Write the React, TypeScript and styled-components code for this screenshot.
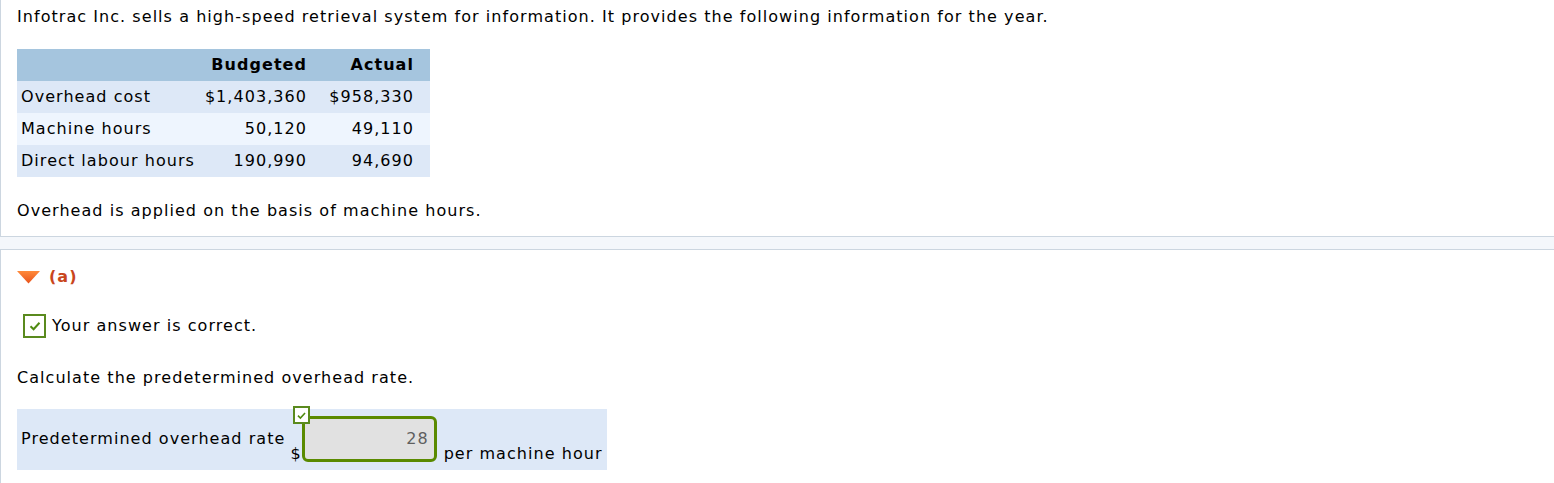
import React from 'react';
import styled, { createGlobalStyle } from 'styled-components';

const GlobalStyle = createGlobalStyle`
  body {
    margin: 0;
    background: #ffffff;
    font-family: 'DejaVu Sans', Verdana, sans-serif;
    font-size: 16px;
    letter-spacing: 1.05px;
    color: #000000;
  }
`;

const Page = styled.div`
  width: 1554px;
`;

const Panel = styled.section<{ top?: boolean }>`
  border-left: 1px solid #ccd6e0;
  ${props => (props.top ? 'border-bottom: 1px solid #ccd6e0;' : 'border-top: 1px solid #ccd6e0;')}
  padding: ${props => (props.top ? '7px 16px 15px 16px' : '17px 16px 13px 16px')};
  background: #ffffff;
`;

const Spacer = styled.div`
  height: 12px;
  background: #f4f7fb;
`;

const Text = styled.p<{ mt?: number }>`
  margin: ${props => props.mt || 0}px 0 0;
  line-height: 20px;
`;

const DataTable = styled.table`
  margin-top: 22px;
  border-collapse: collapse;
  table-layout: fixed;
  width: 413px;

  th,
  td {
    height: 32px;
    padding: 0 4px;
    line-height: 20px;
    white-space: nowrap;
  }

  th {
    background: #a5c5de;
    font-weight: bold;
    text-align: right;
  }

  tbody tr:nth-child(odd) td {
    background: #dde8f7;
  }

  tbody tr:nth-child(even) td {
    background: #eef5fe;
  }

  .label {
    text-align: left;
    width: 173px;
  }

  .budget {
    text-align: right;
    padding-right: 9px;
    width: 105px;
  }

  .actual {
    text-align: right;
    padding-right: 16px;
  }
`;

const PartHeader = styled.div`
  display: flex;
  align-items: center;
  gap: 9px;
  height: 20px;
  line-height: 20px;
`;

const PartTitle = styled.span`
  color: #c9461c;
  font-weight: bold;
`;

const Feedback = styled.div`
  display: flex;
  align-items: center;
  gap: 6px;
  margin-top: 27px;
  margin-left: 6px;
  line-height: 20px;
`;

const CheckBox = styled.span<{ small?: boolean }>`
  box-sizing: border-box;
  display: flex;
  align-items: center;
  justify-content: center;
  width: ${props => (props.small ? 17 : 23)}px;
  height: ${props => (props.small ? 18 : 24)}px;
  border: 2px solid #5a8a1e;
  background: #ffffff;
`;

const AnswerRow = styled.div`
  box-sizing: border-box;
  display: flex;
  align-items: flex-end;
  width: 590px;
  margin-top: 21px;
  padding: 7px 0 8px 4px;
  background: #dde8f7;
  line-height: 20px;
`;

const AnswerLabel = styled.span`
  align-self: center;
  margin-right: 5px;
`;

const Currency = styled.span`
  margin-bottom: -2px;
`;

const InputWrap = styled.div`
  position: relative;
`;

const AnswerInput = styled.div`
  box-sizing: border-box;
  width: 135px;
  height: 46px;
  border: 3px solid #5a8a00;
  border-radius: 6px;
  background: #e1e1e1;
  color: #5f5f5f;
  text-align: right;
  padding: 10px 5px 0 0;
  line-height: 20px;
`;

const Badge = styled.div`
  position: absolute;
  left: -9px;
  top: -10px;
`;

const Unit = styled.span`
  margin-left: 7px;
  margin-bottom: -2px;
`;

const Tick: React.FC<{ size: number }> = ({ size }) => (
  <svg width={size} height={size} viewBox="0 0 14 14">
    <path d="M2.5 7.2 L5.6 10.2 L11.5 3.8" fill="none" stroke="#4f8a10" strokeWidth="2" />
  </svg>
);

const Caret = () => (
  <svg width="23" height="14" viewBox="0 0 23 14">
    <defs>
      <linearGradient id="caret" x1="0" y1="0" x2="0" y2="1">
        <stop offset="0" stopColor="#ff8a3a" />
        <stop offset="1" stopColor="#e8531c" />
      </linearGradient>
    </defs>
    <polygon points="0,1 23,1 11.5,13.5" fill="url(#caret)" />
  </svg>
);

const rows = [
  { label: 'Overhead cost', budgeted: '$1,403,360', actual: '$958,330' },
  { label: 'Machine hours', budgeted: '50,120', actual: '49,110' },
  { label: 'Direct labour hours', budgeted: '190,990', actual: '94,690' }
];

const App: React.FC = () => {
  return (
    <Page>
      <GlobalStyle />
      <Panel top>
        <Text>
          Infotrac Inc. sells a high-speed retrieval system for information. It provides the
          following information for the year.
        </Text>
        <DataTable>
          <thead>
            <tr>
              <th className="label"></th>
              <th className="budget">Budgeted</th>
              <th className="actual">Actual</th>
            </tr>
          </thead>
          <tbody>
            {rows.map(row => (
              <tr key={row.label}>
                <td className="label">{row.label}</td>
                <td className="budget">{row.budgeted}</td>
                <td className="actual">{row.actual}</td>
              </tr>
            ))}
          </tbody>
        </DataTable>
        <Text mt={24}>Overhead is applied on the basis of machine hours.</Text>
      </Panel>
      <Spacer />
      <Panel>
        <PartHeader>
          <Caret />
          <PartTitle>(a)</PartTitle>
        </PartHeader>
        <Feedback>
          <CheckBox>
            <Tick size={14} />
          </CheckBox>
          <span>Your answer is correct.</span>
        </Feedback>
        <Text mt={30}>Calculate the predetermined overhead rate.</Text>
        <AnswerRow>
          <AnswerLabel>Predetermined overhead rate</AnswerLabel>
          <Currency>$</Currency>
          <InputWrap>
            <AnswerInput>28</AnswerInput>
            <Badge>
              <CheckBox small>
                <Tick size={11} />
              </CheckBox>
            </Badge>
          </InputWrap>
          <Unit>per machine hour</Unit>
        </AnswerRow>
      </Panel>
    </Page>
  );
};

export default App;
